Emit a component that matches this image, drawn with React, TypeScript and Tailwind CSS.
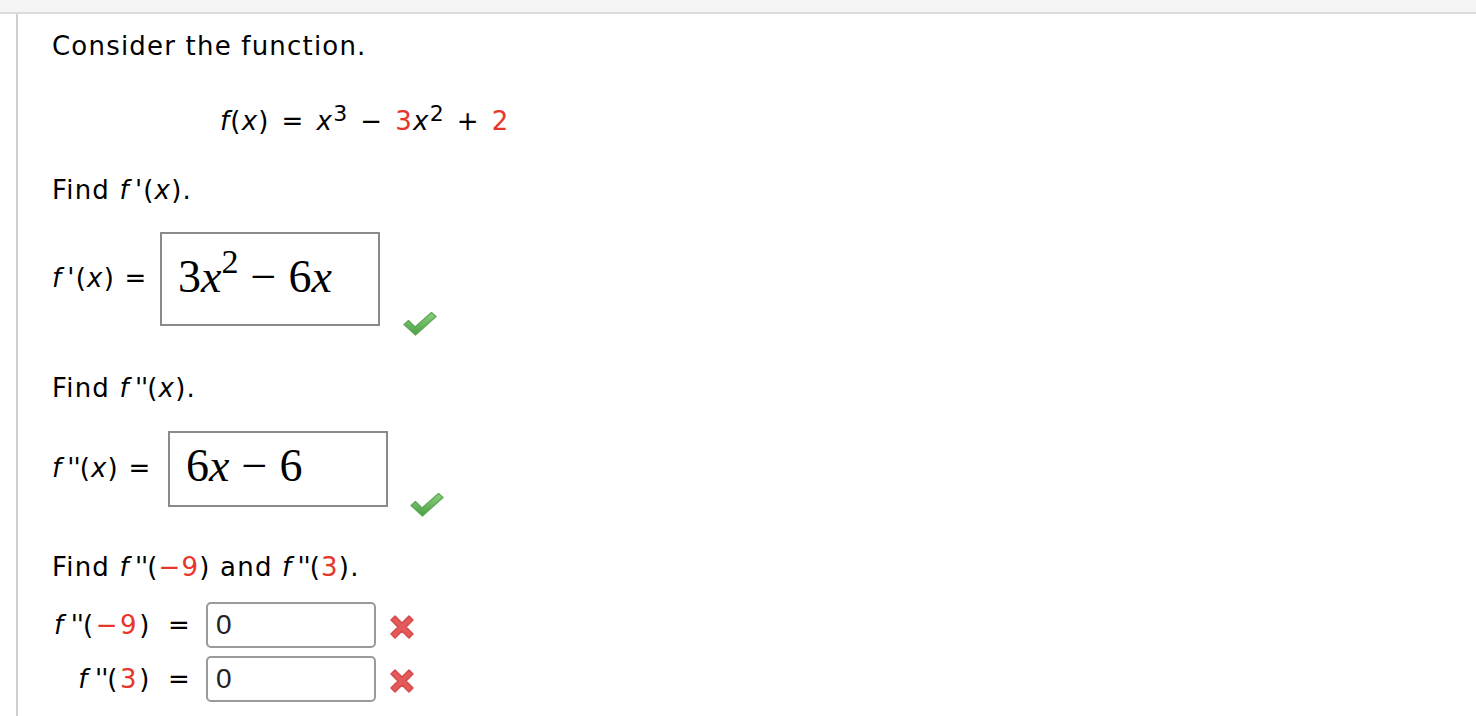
import React from "react";

const sans = { fontFamily: '"DejaVu Sans", Verdana, sans-serif' };

function Check() {
  return (
    <svg width="36" height="27" viewBox="0 0 36 27">
      <defs>
        <linearGradient id="gck" x1="0" y1="0" x2="0" y2="1">
          <stop offset="0" stopColor="#8fd07f" />
          <stop offset="1" stopColor="#4a9f45" />
        </linearGradient>
      </defs>
      <path
        d="M2 14.5 L6.5 10.5 L13 17 L29.5 2.5 L34 6.5 L13.5 25 Z"
        fill="url(#gck)"
        stroke="#5aa852"
        strokeWidth="1.2"
        strokeLinejoin="round"
      />
    </svg>
  );
}

function Cross() {
  return (
    <svg width="30" height="30" viewBox="0 0 30 30">
      <path
        d="M4 8 L8 4 L15 11 L22 4 L26 8 L19 15 L26 22 L22 26 L15 19 L8 26 L4 22 L11 15 Z"
        fill="#e25a5a"
        stroke="#d84a4a"
        strokeWidth="1.5"
        strokeLinejoin="round"
      />
    </svg>
  );
}

const Red = ({ children }: { children: React.ReactNode }) => (
  <span className="text-[#e8352b]">{children}</span>
);

const X = () => <span className="italic">x</span>;

// f with one or two primes, spaced like the original
const Fp = ({ n = 0 }: { n?: number }) => (
  <>
    <span className="italic">f</span>
    {n === 1 && <span className="ml-[5px] italic">'</span>}
    {n === 2 && <span className="ml-[5px] italic tracking-[-1px]">''</span>}
  </>
);

function MathBox({ children, className }: { children: React.ReactNode; className: string }) {
  return (
    <div
      className={`flex items-center border-2 border-[#8a8a8a] pl-[16px] text-[46px] tracking-normal text-black ${className}`}
      style={{ fontFamily: '"Liberation Serif", "Times New Roman", serif' }}
    >
      {children}
    </div>
  );
}

function Answer() {
  return (
    <div
      className="flex h-[46px] w-[170px] items-center rounded-[5px] border-2 border-[#9a9a9a] pl-[8px] text-[28px] tracking-normal text-[#222]"
      style={{ fontFamily: '"Liberation Sans", Arial, sans-serif' }}
    >
      0
    </div>
  );
}

export default function App() {
  return (
    <div className="min-h-[716px] w-[1476px] bg-white text-black" style={sans}>
      <div className="h-[14px] border-b-2 border-[#dcdcdc] bg-[#f5f5f5]" />
      <div className="ml-[16px] min-h-[702px] border-l-2 border-[#cfcfcf] pl-[34px] pt-[17px] text-[26px] leading-[30px] tracking-[1.2px]">
        <p>Consider the function.</p>

        <p className="mt-[42px] pl-[168px] [word-spacing:2.5px]">
          <Fp />(<X />) = <X />
          <span className="align-[9px] text-[22px] leading-none">3</span> − <Red>3</Red>
          <X />
          <span className="align-[9px] text-[22px] leading-none">2</span> + <Red>2</Red>
        </p>

        <p className="mt-[39px]">
          Find <Fp n={1} />(<X />).
        </p>

        <div className="mt-[27px] flex items-start">
          <span className="mt-[31px] w-[108px] whitespace-nowrap">
            <Fp n={1} />(<X />) =
          </span>
          <MathBox className="h-[94px] w-[220px] pb-[4px]">
            <span>3</span>
            <span className="italic">x</span>
            <span className="mb-[30px] text-[34px] leading-none">2</span>
            <span className="mx-[12px]">−</span>
            <span>6</span>
            <span className="italic">x</span>
          </MathBox>
          <span className="ml-[22px] mt-[78px]">
            <Check />
          </span>
        </div>

        <p className="mt-[36px]">
          Find <Fp n={2} />(<X />).
        </p>

        <div className="mt-[28px] flex items-start">
          <span className="mt-[22px] w-[116px] whitespace-nowrap">
            <Fp n={2} />(<X />) =
          </span>
          <MathBox className="h-[76px] w-[220px] pb-[6px]">
            <span>6</span>
            <span className="italic">x</span>
            <span className="mx-[12px]">−</span>
            <span>6</span>
          </MathBox>
          <span className="ml-[21px] mt-[60px]">
            <Check />
          </span>
        </div>

        <p className="mt-[34px]">
          Find <Fp n={2} />(<Red>−9</Red>) and <Fp n={2} />(<Red>3</Red>).
        </p>

        <div className="mt-[20px] flex flex-col gap-[8px]">
          <div className="flex items-center">
            <span className="w-[100px] whitespace-nowrap text-right tracking-[2.6px]">
              <Fp n={2} />(<Red>−9</Red>)
            </span>
            <span className="ml-[16px] w-[38px]">=</span>
            <Answer />
            <span className="ml-[11px] mt-[4px]">
              <Cross />
            </span>
          </div>
          <div className="flex items-center">
            <span className="w-[100px] whitespace-nowrap text-right tracking-[2.6px]">
              <Fp n={2} />(<Red>3</Red>)
            </span>
            <span className="ml-[16px] w-[38px]">=</span>
            <Answer />
            <span className="ml-[11px] mt-[4px]">
              <Cross />
            </span>
          </div>
        </div>
      </div>
    </div>
  );
}
